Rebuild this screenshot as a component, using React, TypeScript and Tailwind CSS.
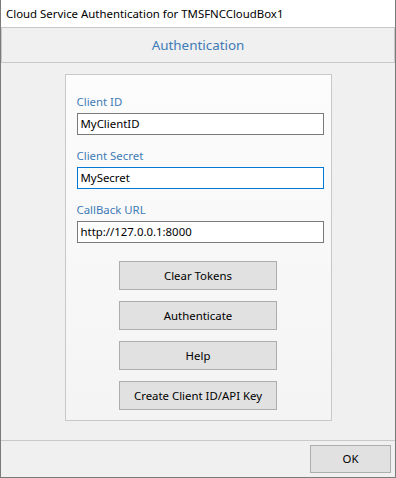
export default function App() {
  const font = { fontFamily: '"Segoe UI", "Noto Sans", "Open Sans", sans-serif' };
  const buttons = ["Clear Tokens", "Authenticate", "Help", "Create Client ID/API Key"];

  return (
    <div
      className="w-[396px] h-[478px] flex flex-col bg-[#f0f0f0] border-x border-b border-[#7a7a7a] text-[11.4px] text-black overflow-hidden"
      style={font}
    >
      {/* Title bar */}
      <div className="h-[27px] bg-white flex items-center pl-[5px] text-[11.4px] leading-none">
        Cloud Service Authentication for TMSFNCCloudBox1
      </div>

      {/* Header */}
      <div className="h-[36px] border border-[#c8c8c8] flex items-center justify-center text-[13.4px] text-[#3e7bb6]">
        Authentication
      </div>

      {/* Body */}
      <div className="flex-1 flex justify-center pt-[11px]">
        <div className="w-[267px] h-[347px] border border-[#c8c8c8] bg-gradient-to-b from-[#fcfcfc] to-[#f4f4f4] pl-[11px] pr-[7px] pt-[18px] flex flex-col">
          <Field label="Client ID" value="MyClientID" />
          <Field label="Client Secret" value="MySecret" focused />
          <Field label="CallBack URL" value="http://127.0.0.1:8000" />

          <div className="flex flex-col items-center gap-[11px] mt-[6px] pr-[4px]">
            {buttons.map((b) => (
              <div
                key={b}
                className="w-[158px] h-[29px] bg-[#e1e1e1] border border-[#adadad] flex items-center justify-center"
              >
                {b}
              </div>
            ))}
          </div>
        </div>
      </div>

      {/* Footer */}
      <div className="h-[37px] border-t border-[#c8c8c8] flex items-start justify-end pr-[4px] pt-[4px]">
        <div className="w-[81px] h-[28px] bg-[#e1e1e1] border border-[#adadad] flex items-center justify-center">
          OK
        </div>
      </div>
    </div>
  );
}

function Field({ label, value, focused }: { label: string; value: string; focused?: boolean }) {
  return (
    <div className="flex flex-col mb-[12px]">
      <div className="h-[17px] flex items-center text-[#3e7bb6] leading-none">{label}</div>
      <div
        className={
          "mt-[3px] h-[22px] w-[247px] bg-white border flex items-center pl-[3px] leading-none " +
          (focused ? "border-[#0078d7]" : "border-[#7a7a7a]")
        }
      >
        {value}
      </div>
    </div>
  );
}
